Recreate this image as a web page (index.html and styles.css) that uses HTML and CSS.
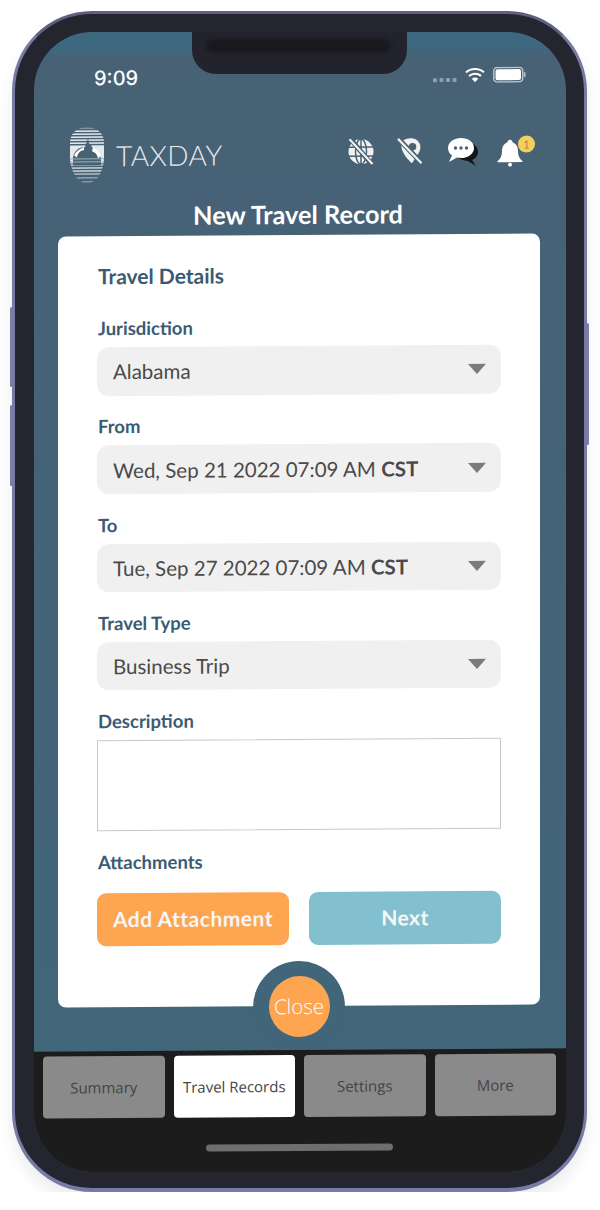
FILE: index.html
```html
<!DOCTYPE html>
<html lang="en">
<head>
    <meta charset="UTF-8">
    <title>Taxday - New Travel Record</title>
    <link rel="stylesheet" href="styles.css">
</head>
<body>
    <div class="phone">
        <span class="side-btn side-left-1"></span>
        <span class="side-btn side-left-2"></span>
        <span class="side-btn side-right"></span>

        <div class="screen">
            <div class="app">
                <div class="status-bar">
                    <span class="time">9:09</span>
                    <div class="status-icons">
                        <svg class="signal" width="24" height="6" viewBox="0 0 24 6"><g fill="#8fa0ac"><rect x="0" y="1" width="4" height="4" rx="1"/><rect x="6.500" y="1" width="4" height="4" rx="1"/><rect x="13" y="1" width="4" height="4" rx="1"/><rect x="19.500" y="1" width="4" height="4" rx="1"/></g></svg>
                        <svg class="wifi" width="20" height="16" viewBox="0 0 20 16"><g fill="none" stroke="#ffffff" stroke-width="2"><path d="M1 5.500C6 1 14 1 19 5.500"/><path d="M4 9C7.500 6 12.500 6 16 9"/></g><path d="M6.800 11.800C8.800 10.300 11.200 10.300 13.200 11.800L10 15.300Z" fill="#ffffff"/></svg>
                        <svg class="battery" width="33" height="16" viewBox="0 0 33 16"><rect x="0.750" y="0.750" width="29" height="14.500" rx="3.500" fill="none" stroke="#b9c4cc" stroke-width="1.500"/><rect x="2.500" y="2.500" width="25.500" height="11" rx="2" fill="#ffffff"/><rect x="31" y="5.500" width="1.500" height="5" rx="0.700" fill="#b9c4cc"/></svg>
                    </div>
                </div>

                <header class="brand-row">
                    <div class="brand">
                        <svg class="logo" width="35" height="56" viewBox="0 0 35 56">
                            <defs>
                                <clipPath id="logo-clip"><path d="M17 0C25 0 33 4 34 14L34 30C34 42 28 56 17 56C7 56 0 42 0 30L0 14C1 4 9 0 17 0Z"/></clipPath>
                            </defs>
                            <g clip-path="url(#logo-clip)">
                                <g fill="#e4e9ec">
                                    <rect x="0" y="0" width="35" height="1.200" opacity="0.600"/>
                                    <rect x="0" y="3" width="35" height="1.500"/>
                                    <rect x="0" y="6" width="35" height="1.500"/>
                                    <rect x="0" y="9" width="35" height="1.500"/>
                                    <rect x="0" y="12" width="35" height="1.500"/>
                                    <rect x="0" y="15" width="35" height="1.500"/>
                                    <rect x="0" y="18" width="35" height="18"/>
                                    <rect x="0" y="37" width="35" height="1.300"/>
                                    <rect x="0" y="40" width="35" height="1.300"/>
                                    <rect x="0" y="43" width="35" height="1.200"/>
                                    <rect x="0" y="46" width="35" height="1.200" opacity="0.800"/>
                                    <rect x="6" y="50" width="23" height="1" opacity="0.700"/>
                                    <rect x="11" y="54" width="12" height="1" opacity="0.600"/>
                                </g>
                                <path d="M3 38L3 30C4 24 9 20 13 20L15 20L16 17L18 11L19 16L21 18L22 20C26 22 30 26 31 31L31 38Z" fill="#486274"/>
                                <path d="M4 28C6 24 10 21 14 20L14 23C10 23 8 26 7 30Z" fill="#ffffff"/>
                                <path d="M23 20C27 22 30 25 31 29L28 31C27 27 25 25 22 24Z" fill="#ffffff"/>
                                <g fill="#9fb0bb">
                                    <rect x="0" y="31" width="35" height="1"/>
                                    <rect x="0" y="34" width="35" height="1"/>
                                </g>
                            </g>
                        </svg>
                        <span class="brand-name">TAXDAY</span>
                    </div>
                    <div class="header-icons">
                        <svg width="28" height="28" viewBox="0 0 28 28">
                            <circle cx="14" cy="14" r="12.500" fill="#f1f1f1"/>
                            <g fill="none" stroke="#486274" stroke-width="1.500">
                                <ellipse cx="14" cy="14" rx="5.500" ry="12.500"/>
                                <path d="M14 1.500V26.500M2 9.500H26M2 18.500H26"/>
                            </g>
                            <path d="M3 1L25 27" stroke="#486274" stroke-width="5"/>
                            <path d="M2.500 1.500L25.500 26.500" stroke="#f1f1f1" stroke-width="2.200"/>
                        </svg>
                        <svg width="26" height="27" viewBox="0 0 26 27">
                            <path d="M6 3.500C9 .5 16 0 20 3C24.500 6.500 24 12 21.500 16L15 26C11 23 5.500 16.500 4.500 10C4.200 7.500 4.700 5 6 3.500Z" fill="#f1f1f1"/>
                            <circle cx="15.500" cy="9.500" r="3.800" fill="#486274"/>
                            <path d="M1 1L25 26" stroke="#486274" stroke-width="5"/>
                            <path d="M1 1.500L24.500 26" stroke="#f1f1f1" stroke-width="2.200"/>
                        </svg>
                        <svg width="32" height="30" viewBox="0 0 32 30">
                            <path d="M16 5C24 5 31 8 31 15C31 19 28 22 25 23L29 29L21 24C16 24 12 22 10 19Z" fill="#151515"/>
                            <path d="M14 1C21 1 27 5 27 11C27 17 21 21 14 21C12.500 21 11 20.800 10 20.500L2 25L5 18.500C2.500 17 1 14 1 11C1 5 7 1 14 1Z" fill="#ffffff"/>
                            <g fill="#486274"><circle cx="8.500" cy="11" r="1.700"/><circle cx="14" cy="11" r="1.700"/><circle cx="19.500" cy="11" r="1.700"/></g>
                        </svg>
                        <div class="bell">
                            <svg width="26" height="28" viewBox="0 0 26 28">
                                <path d="M13 1C14.500 1 15.500 2 15.500 3.500C19.500 5 21 8.500 21 12.500C21 17 22.500 20 25.500 22.500L25.500 23.500L.5 23.500L.5 22.500C3.500 20 5 17 5 12.500C5 8.500 6.500 5 10.500 3.500C10.500 2 11.500 1 13 1Z" fill="#ffffff"/>
                                <circle cx="13" cy="26" r="2" fill="#ffffff"/>
                            </svg>
                            <span class="badge">1</span>
                        </div>
                    </div>
                </header>

                <h1 class="page-title">New Travel Record</h1>

                <main class="card">
                    <h2 class="card-title">Travel Details</h2>

                    <div class="form-row">
                        <div class="form-label">Jurisdiction</div>
                        <div class="select"><span>Alabama</span><i class="arrow"></i></div>
                    </div>
                    <div class="form-row">
                        <div class="form-label">From</div>
                        <div class="select"><span>Wed, Sep 21 2022 07:09 AM <b>CST</b></span><i class="arrow"></i></div>
                    </div>
                    <div class="form-row">
                        <div class="form-label">To</div>
                        <div class="select"><span>Tue, Sep 27 2022 07:09 AM <b>CST</b></span><i class="arrow"></i></div>
                    </div>
                    <div class="form-row">
                        <div class="form-label">Travel Type</div>
                        <div class="select"><span>Business Trip</span><i class="arrow"></i></div>
                    </div>
                    <div class="form-row">
                        <div class="form-label">Description</div>
                        <div class="text-box"></div>
                    </div>
                    <div class="form-row">
                        <div class="form-label">Attachments</div>
                    </div>

                    <div class="actions">
                        <div class="btn btn-orange">Add Attachment</div>
                        <div class="btn btn-blue">Next</div>
                    </div>

                    <div class="close-halo"><div class="close-btn">Close</div></div>
                </main>

                <footer class="tab-area">
                    <nav class="tabs">
                        <a class="tab">Summary</a>
                        <a class="tab active">Travel Records</a>
                        <a class="tab">Settings</a>
                        <a class="tab">More</a>
                    </nav>
                    <div class="home-bar"></div>
                </footer>
            </div>
        </div>

        <div class="notch"><span class="speaker"></span></div>
    </div>
</body>
</html>
```

FILE: styles.css
```css
body {
    margin: 0;
    background-color: #ffffff;
    font-family: 'Lato', 'Liberation Sans', sans-serif;
    color: #444444;
}

.phone {
    position: relative;
    box-sizing: border-box;
    width: 575px;
    height: 1181px;
    margin: 11px 0 0 12px;
    padding: 18px 18px 16px 19px;
    background-color: #25252f;
    border: 3px solid #777aa3;
    border-top-color: #5f6080;
    border-bottom-width: 4px;
    border-radius: 80px;
    box-shadow: 0 10px 16px rgba(0, 0, 0, 0.08);
}

.side-btn {
    position: absolute;
    width: 3px;
    background-color: #7b7da6;
    border-radius: 2px;
}

.side-left-1 { left: -5px; top: 293px; height: 80px; }
.side-left-2 { left: -5px; top: 391px; height: 81px; }
.side-right { right: -5px; top: 309px; height: 122px; }

.screen {
    height: 100%;
    overflow: hidden;
    border-radius: 58px;
    background-color: #1c1c1c;
}

/* the whole photo of the app leans a little: right side sits higher */
.app {
    box-sizing: border-box;
    height: 1149px;
    margin-top: -4px;
    padding-top: 4px;
    display: flex;
    flex-direction: column;
    background: linear-gradient(#3e687f 0, #3e687f 18px, #486175 32px, #466276 230px, #41667a 100%);
    transform: skewY(-0.36deg);
}

.status-bar {
    height: 94px;
    padding: 32px 40px 0 60px;
    box-sizing: border-box;
    display: flex;
    justify-content: space-between;
    align-items: flex-start;
    color: #ffffff;
}

.time {
    font-family: 'Inter', 'Liberation Sans', sans-serif;
    font-size: 20px;
    font-weight: 500;
    line-height: 26px;
}

.status-icons {
    display: flex;
    align-items: center;
    gap: 8px;
    height: 22px;
    margin-top: 1px;
}

.status-icons .signal { margin-top: 10px; }

.brand-row {
    height: 56px;
    padding: 0 19px 0 36px;
    display: flex;
    justify-content: space-between;
    align-items: flex-start;
}

.brand {
    display: flex;
    align-items: center;
    gap: 11px;
    color: #e6ebee;
}

.brand-name {
    font-size: 28px;
    font-weight: 300;
    letter-spacing: 0.4px;
}

.header-icons {
    display: grid;
    grid-template-columns: repeat(4, 50px);
    margin-top: 12px;
    align-items: start;
}

.bell {
    position: relative;
    width: 26px;
    margin-top: 2px;
}

.badge {
    position: absolute;
    top: -3px;
    right: -12px;
    width: 17px;
    height: 17px;
    border-radius: 50%;
    background-color: #f2cf5e;
    color: #a08c3c;
    font-size: 11px;
    line-height: 17px;
    text-align: center;
}

.page-title {
    margin: 17px 0 6px;
    height: 30px;
    text-align: center;
    color: #ffffff;
    font-size: 25.300px;
    font-weight: 700;
    line-height: 30px;
    padding-right: 4px;
}

.card {
    position: relative;
    box-sizing: border-box;
    width: 482px;
    height: 770.5px;
    margin-left: 24px;
    padding: 28px 39px 0;
    background-color: #ffffff;
    border-radius: 8px;
}

.card-title {
    margin: 0 0 30px 1px;
    color: #3b5b72;
    font-size: 21px;
    font-weight: 700;
    line-height: 24px;
}

.form-row {
    margin-bottom: 20.8px;
}

.form-label {
    padding-left: 1px;
    color: #3b5b72;
    font-size: 18.500px;
    font-weight: 700;
    line-height: 21px;
    margin-bottom: 8px;
}

.select {
    box-sizing: border-box;
    height: 48.500px;
    padding: 0 15px 0 16px;
    display: flex;
    align-items: center;
    justify-content: space-between;
    background-color: #f0f0f0;
    border-radius: 12px;
    font-size: 20.500px;
    color: #4a4a4a;
}

.arrow {
    width: 0;
    height: 0;
    border-left: 9.500px solid transparent;
    border-right: 9.500px solid transparent;
    border-top: 10px solid #7a7a7a;
}

.text-box {
    box-sizing: border-box;
    height: 91px;
    border: 1.500px solid #c8c8c8;
}

.actions {
    display: flex;
    gap: 20px;
    margin-top: -1px;
}

.btn {
    flex: 1;
    height: 53px;
    padding-bottom: 2px;
    box-sizing: border-box;
    display: flex;
    align-items: center;
    justify-content: center;
    border-radius: 9px;
    color: #f6f6f6;
    font-size: 21px;
    font-weight: 700;
    letter-spacing: 0.5px;
}

.btn-orange { background-color: #fea552; }
.btn-blue { background-color: #83c0cf; }

.close-halo {
    position: absolute;
    left: 195px;
    bottom: -47px;
    width: 92px;
    height: 92px;
    border-radius: 50%;
    background-color: #41667a;
    display: flex;
    align-items: center;
    justify-content: center;
}

.close-btn {
    width: 61px;
    height: 61px;
    border-radius: 50%;
    background-color: #fea552;
    color: #ffffff;
    font-family: 'Open Sans', sans-serif;
    font-size: 20.500px;
    font-weight: 300;
    line-height: 61px;
    text-align: center;
}

.tab-area {
    position: relative;
    margin-top: auto;
    height: 127px;
    box-sizing: border-box;
    padding: 5px 10px 0 9px;
    background-color: #1c1c1c;
}

.tabs {
    display: flex;
    gap: 9px;
}

.tab {
    flex: 1;
    height: 62px;
    background-color: #8a8a8a;
    border-radius: 4px;
    color: #444444;
    font-family: 'Open Sans', sans-serif;
    font-size: 15px;
    line-height: 62px;
    text-align: center;
}

.tab.active {
    background-color: #ffffff;
}

.home-bar {
    width: 187px;
    height: 7px;
    margin: 27px 0 0 163px;
    border-radius: 4px;
    background-color: #6e6e6e;
}

.notch {
    position: absolute;
    top: 18px;
    left: 177px;
    width: 215px;
    height: 42px;
    background-color: #23232d;
    border-radius: 0 0 24px 24px;
}

.speaker {
    position: absolute;
    top: 7px;
    left: 14px;
    width: 185px;
    height: 14px;
    border-radius: 7px;
    background-color: #18181e;
    filter: blur(2px);
}
```
